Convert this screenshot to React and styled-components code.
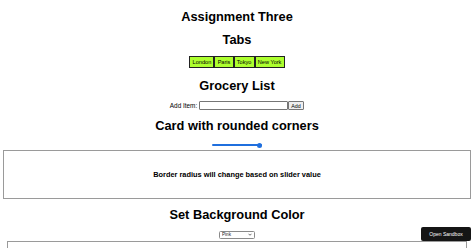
import React, { useState } from "react";
import styled, { createGlobalStyle } from "styled-components";

const GlobalStyle = createGlobalStyle`
  body {
    margin: 3px;
    background: #fff;
    color: #000;
    font-family: "Liberation Sans", Arial, sans-serif;
    font-size: 6.4px;
  }
`;

const Heading = styled.h1`
  font-size: 12.8px;
  line-height: 15.4px;
  font-weight: 700;
  text-align: center;
  margin: 8px 0;

  &:first-of-type {
    margin-top: 6px;
  }
`;

const TabBar = styled.div`
  display: flex;
  justify-content: center;
  padding: 0 0 2px;
`;

const TabButton = styled.button`
  background: #adff2f;
  border: 1px solid #222;
  font-family: "Liberation Sans", Arial, sans-serif;
  font-size: 5.6px;
  line-height: 6px;
  height: 12px;
  padding: 0 2.2px;
  margin: 0;
  color: #000;
`;

const AddRow = styled.div`
  display: flex;
  justify-content: center;
  align-items: flex-start;
  height: 8.4px;
`;

const Label = styled.label`
  font-size: 6.4px;
  line-height: 9px;
  margin-right: 1.5px;
`;

const TextInput = styled.input`
  width: 89px;
  height: 9px;
  box-sizing: border-box;
  border: 1px solid #767676;
  border-radius: 1px;
  padding: 0 1px;
  font-size: 5.3px;
  margin: 0;
`;

const SmallButton = styled.button`
  height: 9px;
  box-sizing: border-box;
  border: 1px solid #767676;
  border-radius: 1px;
  background: #efefef;
  font-family: "Liberation Sans", Arial, sans-serif;
  font-size: 5.3px;
  line-height: 6px;
  padding: 0 2.5px;
  margin: 0;
  color: #000;
`;

const SliderWrap = styled.div`
  display: flex;
  justify-content: center;
  align-items: flex-start;
  height: 9px;
`;

const Slider = styled.input`
  appearance: none;
  -webkit-appearance: none;
  width: 50px;
  height: 8px;
  margin: 0;
  background: transparent;

  &::-webkit-slider-runnable-track {
    height: 2px;
    border-radius: 1px;
    background: #1f6fde;
  }

  &::-webkit-slider-thumb {
    -webkit-appearance: none;
    width: 5px;
    height: 5px;
    border-radius: 50%;
    background: #1f6fde;
    margin-top: -1.5px;
  }
`;

const Card = styled.div`
  height: 49px;
  box-sizing: border-box;
  border: 1px solid #9a9a9a;
  border-radius: ${(p) => p.$radius}px;
  display: flex;
  align-items: center;
  justify-content: center;
  font-weight: 700;
  font-size: 7.4px;
`;

const SelectRow = styled.div`
  display: flex;
  justify-content: center;
`;

const SelectWrap = styled.div`
  position: relative;
  width: 36px;
  height: 8px;
`;

const ColorSelect = styled.select`
  appearance: none;
  -webkit-appearance: none;
  width: 100%;
  height: 100%;
  box-sizing: border-box;
  font-family: "Liberation Sans", Arial, sans-serif;
  font-size: 4.6px;
  line-height: 6px;
  padding: 0 0 0 2px;
  margin: 0;
  border: 1px solid #8a8a8a;
  border-radius: 1.5px;
  background: #fff;
  color: #222;
`;

const Chevron = styled.svg`
  position: absolute;
  right: 3px;
  top: 2.3px;
  width: 4px;
  height: 3px;
  pointer-events: none;
`;

const ColorBox = styled.div`
  margin: 2.4px 4px 0;
  height: 60px;
  border: 1px solid #9a9a9a;
  background: ${(p) => p.$color};
`;

const SandboxButton = styled.a`
  position: fixed;
  right: 3px;
  bottom: 7px;
  width: 50px;
  height: 14px;
  display: flex;
  align-items: center;
  justify-content: center;
  background: #151515;
  color: #fff;
  border-radius: 2px;
  font-size: 5px;
  text-decoration: none;
`;

const cities = ["London", "Paris", "Tokyo", "New York"];

export default function App() {
  const [radius, setRadius] = useState(0);
  const [color, setColor] = useState("white");

  return (
    <>
      <GlobalStyle />
      <Heading>Assignment Three</Heading>
      <Heading>Tabs</Heading>
      <TabBar>
        {cities.map((c) => (
          <TabButton key={c}>{c}</TabButton>
        ))}
      </TabBar>

      <Heading>Grocery List</Heading>
      <AddRow>
        <Label>Add Item:</Label>
        <TextInput type="text" />
        <SmallButton>Add</SmallButton>
      </AddRow>

      <Heading>Card with rounded corners</Heading>
      <SliderWrap>
        <Slider
          type="range"
          min="0"
          max="50"
          value={50}
          onChange={(e) => setRadius(Number(e.target.value) * 0)}
        />
      </SliderWrap>
      <Card $radius={radius}>Border radius will change based on slider value</Card>

      <Heading>Set Background Color</Heading>
      <SelectRow>
        <SelectWrap>
          <ColorSelect value="pink" onChange={(e) => setColor(e.target.value)}>
            <option value="pink">Pink</option>
            <option value="lightblue">Blue</option>
            <option value="lightgreen">Green</option>
          </ColorSelect>
          <Chevron viewBox="0 0 8 6">
            <path d="M1 1.5 L4 4.5 L7 1.5" fill="none" stroke="#333" strokeWidth="1.4" />
          </Chevron>
        </SelectWrap>
      </SelectRow>
      <ColorBox $color={color} />

      <SandboxButton href="#">Open Sandbox</SandboxButton>
    </>
  );
}
